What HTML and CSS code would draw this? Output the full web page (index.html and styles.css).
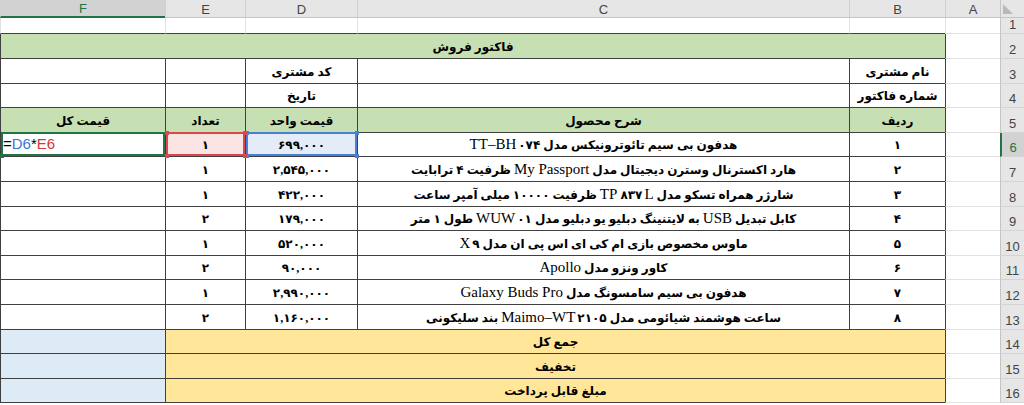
FILE: index.html
```html
<!DOCTYPE html>
<html lang="fa">
<head>
<meta charset="utf-8">
<title>فاکتور فروش</title>
<link rel="stylesheet" href="styles.css">
</head>
<body>
<div class="sheet">
  <!-- column headers -->
  <div class="hd corner"><span class="tri"></span></div>
  <div class="hd">A</div>
  <div class="hd">B</div>
  <div class="hd">C</div>
  <div class="hd">D</div>
  <div class="hd">E</div>
  <div class="hd sel">F</div>

  <!-- row 1 -->
  <div class="rh">1</div>
  <div class="g"></div>
  <div class="g top"></div><div class="g top"></div><div class="g top"></div><div class="g top"></div><div class="g top"></div>

  <!-- row 2 -->
  <div class="rh">2</div>
  <div class="g edge"></div>
  <div class="c green s5"><span class="t">فاکتور فروش</span></div>

  <!-- row 3 -->
  <div class="rh">3</div>
  <div class="g edge"></div>
  <div class="c"><span class="t">نام مشتری</span></div>
  <div class="c"></div>
  <div class="c"><span class="t">کد مشتری</span></div>
  <div class="c"></div>
  <div class="c"></div>

  <!-- row 4 -->
  <div class="rh">4</div>
  <div class="g edge"></div>
  <div class="c"><span class="t">شماره فاکتور</span></div>
  <div class="c"></div>
  <div class="c"><span class="t">تاریخ</span></div>
  <div class="c"></div>
  <div class="c"></div>

  <!-- row 5 -->
  <div class="rh">5</div>
  <div class="g edge"></div>
  <div class="c green"><span class="t">ردیف</span></div>
  <div class="c green"><span class="t">شرح محصول</span></div>
  <div class="c green"><span class="t">قیمت واحد</span></div>
  <div class="c green"><span class="t">تعداد</span></div>
  <div class="c green"><span class="t">قیمت کل</span></div>

  <!-- row 6 -->
  <div class="rh sel">6</div>
  <div class="g edge"></div>
  <div class="c"><span class="t">۱</span></div>
  <div class="c"><span class="t">هدفون بی سیم تائوترونیکس مدل <span class="lat gap">TT–BH</span><span>۰۷۴</span></span></div>
  <div class="c num ref-blue"><span class="t">۶۹۹,۰۰۰</span><span class="hdl tl"></span><span class="hdl tr"></span><span class="hdl bl"></span><span class="hdl br"></span></div>
  <div class="c ref-red"><span class="t">۱</span><span class="hdl tl"></span><span class="hdl tr"></span><span class="hdl bl"></span><span class="hdl br"></span></div>
  <div class="c edit"><span class="op">=</span><span class="rb">D6</span><span class="op">*</span><span class="rr">E6</span><span class="hdl bl"></span></div>

  <!-- row 7 -->
  <div class="rh">7</div>
  <div class="g edge"></div>
  <div class="c"><span class="t">۲</span></div>
  <div class="c"><span class="t">هارد اکسترنال وسترن دیجیتال مدل <span class="lat">My Passport</span> ظرفیت ۴ ترابایت</span></div>
  <div class="c num"><span class="t">۲,۵۴۵,۰۰۰</span></div>
  <div class="c"><span class="t">۱</span></div>
  <div class="c"></div>

  <!-- row 8 -->
  <div class="rh">8</div>
  <div class="g edge"></div>
  <div class="c"><span class="t">۳</span></div>
  <div class="c"><span class="t">شارژر همراه تسکو مدل <span class="lat">TP </span><span>۸۳۷</span><span class="lat gapl">L</span> ظرفیت ۱۰۰۰۰ میلی آمپر ساعت</span></div>
  <div class="c num"><span class="t">۴۲۲,۰۰۰</span></div>
  <div class="c"><span class="t">۱</span></div>
  <div class="c"></div>

  <!-- row 9 -->
  <div class="rh">9</div>
  <div class="g edge"></div>
  <div class="c"><span class="t">۴</span></div>
  <div class="c"><span class="t">کابل تبدیل <span class="lat">USB</span> به لایتنینگ دبلیو یو دبلیو مدل <span class="lat gap">WUW</span><span>۰۱</span> طول ۱ متر</span></div>
  <div class="c num"><span class="t">۱۷۹,۰۰۰</span></div>
  <div class="c"><span class="t">۲</span></div>
  <div class="c"></div>

  <!-- row 10 -->
  <div class="rh">10</div>
  <div class="g edge"></div>
  <div class="c"><span class="t">۵</span></div>
  <div class="c"><span class="t">ماوس مخصوص بازی ام کی ای اس پی ان مدل <span class="lat gap">X</span><span>۹</span></span></div>
  <div class="c num"><span class="t">۵۲۰,۰۰۰</span></div>
  <div class="c"><span class="t">۱</span></div>
  <div class="c"></div>

  <!-- row 11 -->
  <div class="rh">11</div>
  <div class="g edge"></div>
  <div class="c"><span class="t">۶</span></div>
  <div class="c"><span class="t">کاور ونزو مدل <span class="lat">Apollo</span></span></div>
  <div class="c num"><span class="t">۹۰,۰۰۰</span></div>
  <div class="c"><span class="t">۲</span></div>
  <div class="c"></div>

  <!-- row 12 -->
  <div class="rh">12</div>
  <div class="g edge"></div>
  <div class="c"><span class="t">۷</span></div>
  <div class="c"><span class="t">هدفون بی سیم سامسونگ مدل <span class="lat">Galaxy Buds Pro</span></span></div>
  <div class="c num"><span class="t">۲,۹۹۰,۰۰۰</span></div>
  <div class="c"><span class="t">۱</span></div>
  <div class="c"></div>

  <!-- row 13 -->
  <div class="rh">13</div>
  <div class="g edge"></div>
  <div class="c"><span class="t">۸</span></div>
  <div class="c"><span class="t">ساعت هوشمند شیائومی مدل <span class="lat gap">Maimo–WT</span><span>۲۱۰۵</span> بند سلیکونی</span></div>
  <div class="c num"><span class="t">۱,۱۶۰,۰۰۰</span></div>
  <div class="c"><span class="t">۲</span></div>
  <div class="c"></div>

  <!-- row 14 -->
  <div class="rh">14</div>
  <div class="g edge"></div>
  <div class="c yellow s4"><span class="t">جمع کل</span></div>
  <div class="c blue"></div>

  <!-- row 15 -->
  <div class="rh">15</div>
  <div class="g edge"></div>
  <div class="c yellow s4"><span class="t">تخفیف</span></div>
  <div class="c blue"></div>

  <!-- row 16 -->
  <div class="rh">16</div>
  <div class="g edge"></div>
  <div class="c yellow s4"><span class="t">مبلغ قابل پرداخت</span></div>
  <div class="c blue"></div>
</div>
</body>
</html>
```

FILE: styles.css
```css
* {
  box-sizing: border-box;
  margin: 0;
  padding: 0;
}

html,
body {
  background: #ffffff;
}

body {
  width: 1024px;
  height: 405px;
  overflow: hidden;
  font-family: "Liberation Serif", "DejaVu Sans", sans-serif;
}

.sheet {
  direction: rtl;
  display: grid;
  grid-template-columns: 24px 55px 96px 492px 112px 80px 165px;
  grid-template-rows: 18px 16px 25px repeat(14, 24.6px);
}

/* column headers */
.hd {
  background: #e6e6e6;
  color: #444444;
  font: 13px "Liberation Sans", Arial, sans-serif;
  display: flex;
  align-items: center;
  justify-content: center;
  padding-top: 1px;
  border-left: 1px solid #d0d0d0;
  border-bottom: 1px solid #c4c4c4;
}

.hd.sel {
  background: #d2d2d2;
  color: #217346;
  border-bottom: 2px solid #217346;
}

.corner {
  align-items: flex-end;
  justify-content: flex-end;
  padding: 0 0 3px 2px;
  border-left-color: #c4c4c4;
}

.tri {
  width: 0;
  height: 0;
  border-bottom: 10px solid #b9b9b9;
  border-right: 10px solid transparent;
}

/* row headers */
.rh {
  background: #e6e6e6;
  color: #444444;
  font: 13px "Liberation Sans", Arial, sans-serif;
  display: flex;
  align-items: flex-end;
  justify-content: center;
  padding-bottom: 1px;
  border-bottom: 1px solid #d4d4d4;
  border-left: 1px solid #c4c4c4;
}

.rh.sel {
  background: #d2d2d2;
  color: #217346;
  border-left: 2px solid #217346;
}

/* plain grid cells */
.g {
  border-left: 1px solid #e1e1e1;
  border-bottom: 1px solid #e1e1e1;
}

.g.edge {
  border-left-color: #404040;
}

.g.top {
  border-bottom-color: #404040;
}

/* table cells */
.c {
  position: relative;
  border-left: 1px solid #404040;
  border-bottom: 1px solid #404040;
  display: flex;
  align-items: flex-end;
  justify-content: center;
  padding-bottom: 3px;
  font-weight: bold;
  font-size: 12px;
  color: #000000;
  white-space: nowrap;
}

.t {
  display: block;
}

.num {
  letter-spacing: 2px;
}

.lat {
  font-weight: normal;
  font-size: 15px;
  letter-spacing: 0;
}

.lat.gap {
  margin-right: 2px;
}

.lat.gapl {
  margin-left: 2px;
}

.green {
  background: #c6e0b4;
}

.yellow {
  background: #ffe699;
}

.blue {
  background: #ddebf7;
}

.s5 {
  grid-column: span 5;
}

.s4 {
  grid-column: span 4;
}

/* formula editing state */
.edit {
  direction: ltr;
  align-items: flex-start;
  justify-content: flex-start;
  padding: 2px 0 0 2px;
  font: 15px "Liberation Sans", Arial, sans-serif;
}

.edit::after {
  content: "";
  position: absolute;
  top: -1px;
  left: 0;
  right: 0;
  bottom: 0;
  border: 2px solid #217346;
}

.op {
  color: #000000;
}

.rb {
  color: #3a75d4;
}

.rr {
  color: #d2383a;
}

.ref-red {
  background: #fbe4e4;
}

.ref-red::after,
.ref-blue::after {
  content: "";
  position: absolute;
  top: -1px;
  left: 0;
  right: 0;
  bottom: 0;
  border: 2px solid #d9494b;
}

.ref-blue {
  background: #e4ecf8;
}

.ref-blue::after {
  border-color: #4a7fd6;
}

.hdl {
  position: absolute;
  width: 4px;
  height: 4px;
  z-index: 1;
  background: #d9494b;
}

.ref-blue .hdl {
  background: #4a7fd6;
}

.edit .hdl {
  background: #217346;
}

.hdl.tl {
  top: -2px;
  left: -1px;
}

.hdl.tr {
  top: -2px;
  right: -2px;
}

.hdl.bl {
  bottom: -2px;
  left: -1px;
}

.hdl.br {
  bottom: -2px;
  right: -2px;
}
```
